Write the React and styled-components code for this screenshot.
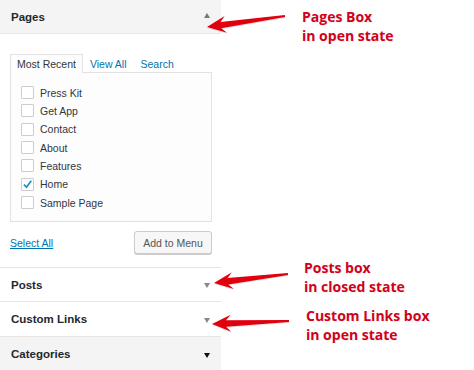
import React from "react";
import styled, { createGlobalStyle } from "styled-components";

const Global = createGlobalStyle`
  html, body { margin: 0; padding: 0; background: #fff; }
  body { font-family: "Liberation Sans", Arial, sans-serif; color: #23282d; }
`;

const Page = styled.div`
  position: relative;
  width: 474px;
  height: 370px;
  overflow: hidden;
  background: #fff;
`;

const Sidebar = styled.div`
  width: 221px;
  display: flex;
  flex-direction: column;
`;

const SectionHeader = styled.div`
  height: ${(p) => p.$h}px;
  box-sizing: border-box;
  display: flex;
  align-items: center;
  justify-content: space-between;
  padding: 0 11px 0 11px;
  background: ${(p) => (p.$shaded ? "#f4f4f4" : "#fff")};
  border-bottom: ${(p) => (p.$noBorder ? "none" : "1px solid #e6e6e6")};
  font-size: 11.5px;
  font-weight: bold;
  color: #23282d;
`;

const Caret = styled.span`
  width: 0;
  height: 0;
  border-left: 3.5px solid transparent;
  border-right: 3.5px solid transparent;
  ${(p) =>
    p.$up
      ? `border-bottom: 5px solid ${p.$color};`
      : `border-top: 5px solid ${p.$color};`}
  margin-top: ${(p) => (p.$up ? "-2px" : "2px")};
`;

const Body = styled.div`
  padding: 20px 8px 13px 10px;
  border-bottom: 1px solid #e6e6e6;
`;

const Tabs = styled.div`
  display: flex;
  align-items: flex-end;
  height: 19px;
  position: relative;
  z-index: 1;
`;

const Tab = styled.div`
  font-size: 10.5px;
  height: ${(p) => (p.$active ? "19px" : "18px")};
  box-sizing: border-box;
  display: flex;
  align-items: center;
  padding: 0 ${(p) => (p.$active ? "6px" : "7px")};
  color: ${(p) => (p.$active ? "#32373c" : "#0073aa")};
  background: ${(p) => (p.$active ? "#fdfdfd" : "transparent")};
  border: ${(p) => (p.$active ? "1px solid #e2e2e2" : "none")};
  border-bottom: none;
`;

const TabPanel = styled.div`
  margin-top: -1px;
  width: 202px;
  height: 150px;
  box-sizing: border-box;
  border: 1px solid #e2e2e2;
  background: #fdfdfd;
  padding: 13px 0 0 10px;
  display: flex;
  flex-direction: column;
  gap: 5.35px;
`;

const Row = styled.label`
  display: flex;
  align-items: center;
  gap: 6px;
  font-size: 10.5px;
  color: #32373c;
  height: 13px;
`;

const Box = styled.span`
  width: 13px;
  height: 13px;
  box-sizing: border-box;
  border: 1px solid #cdcdcd;
  border-radius: 1px;
  background: #fff;
  display: flex;
  align-items: center;
  justify-content: center;
`;

const Actions = styled.div`
  display: flex;
  justify-content: space-between;
  align-items: center;
  width: 202px;
  margin-top: 9px;
`;

const SelectAll = styled.a`
  font-size: 10.5px;
  color: #0073aa;
  text-decoration: underline;
  margin-top: 1px;
`;

const Button = styled.button`
  width: 78px;
  height: 23px;
  font-family: inherit;
  font-size: 10.5px;
  color: #555;
  background: #f7f7f7;
  border: 1px solid #cccccc;
  border-radius: 3px;
  box-shadow: 0 1px 0 #ccc;
  padding: 0;
`;

const Notes = styled.div`
  position: absolute;
  left: 0;
  top: 0;
  width: 474px;
  height: 370px;
  pointer-events: none;
`;

const Note = styled.div`
  position: absolute;
  left: ${(p) => p.$x}px;
  top: ${(p) => p.$y}px;
  font-family: "Open Sans", "Liberation Sans", sans-serif;
  font-weight: bold;
  font-size: 14px;
  line-height: 19px;
  color: #d0021b;
  text-shadow: 0 0 2px #fff, 1px 1px 1px rgba(0,0,0,0.08);
  white-space: nowrap;
`;

const Overlay = styled.svg`
  position: absolute;
  left: 0;
  top: 0;
`;

function arrowPoints(tx, ty, px, py) {
  const dx = tx - px;
  const dy = ty - py;
  const len = Math.hypot(dx, dy);
  const ux = dx / len;
  const uy = dy / len;
  const nx = -uy;
  const ny = ux;
  const headLen = 19;
  const headW = 8.5;
  const neckW = 3.2;
  const tailW = 0.9;
  const bx = px + ux * headLen;
  const by = py + uy * headLen;
  const nbx = px + ux * (headLen - 5);
  const nby = py + uy * (headLen - 5);
  const pts = [
    [px, py],
    [bx + nx * headW, by + ny * headW],
    [nbx + nx * neckW, nby + ny * neckW],
    [tx + nx * tailW, ty + ny * tailW],
    [tx - nx * tailW, ty - ny * tailW],
    [nbx - nx * neckW, nby - ny * neckW],
    [bx - nx * headW, by - ny * headW],
  ];
  return pts.map((p) => p.map((v) => v.toFixed(1)).join(",")).join(" ");
}

const arrows = [
  [285, 16, 207, 27],
  [288, 274, 214, 283],
  [289, 321, 212, 324],
];

const pages = ["Press Kit", "Get App", "Contact", "About", "Features", "Home", "Sample Page"];

export default function App() {
  return (
    <Page>
      <Global />
      <Sidebar>
        <SectionHeader $h={34} $shaded>
          Pages
          <Caret $up $color="#777" />
        </SectionHeader>
        <Body>
          <Tabs>
            <Tab $active>Most Recent</Tab>
            <Tab>View All</Tab>
            <Tab>Search</Tab>
          </Tabs>
          <TabPanel>
            {pages.map((p) => (
              <Row key={p}>
                <Box>
                  {p === "Home" && (
                    <svg width="11" height="11" viewBox="0 0 11 11">
                      <path d="M2 5.5 L4.5 8.2 L9.3 1.8" fill="none" stroke="#1e8cbe" strokeWidth="1.7" />
                    </svg>
                  )}
                </Box>
                {p}
              </Row>
            ))}
          </TabPanel>
          <Actions>
            <SelectAll>Select All</SelectAll>
            <Button>Add to Menu</Button>
          </Actions>
        </Body>
        <SectionHeader $h={34}>
          Posts
          <Caret $color="#888" />
        </SectionHeader>
        <SectionHeader $h={35}>
          Custom Links
          <Caret $color="#888" />
        </SectionHeader>
        <SectionHeader $h={34} $shaded $noBorder>
          Categories
          <Caret $color="#111" />
        </SectionHeader>
      </Sidebar>
      <Notes>
        <Overlay width="474" height="370">
          {arrows.map((a, i) => (
            <g key={i}>
              <polygon points={arrowPoints(a[0], a[1] + 1, a[2], a[3] + 1)} fill="rgba(0,0,0,0.12)" />
              <polygon points={arrowPoints(...a)} fill="#e0000e" />
            </g>
          ))}
        </Overlay>
        <Note $x={302} $y={7}>
          Pages Box
          <br />
          in open state
        </Note>
        <Note $x={304} $y={258}>
          Posts box
          <br />
          in closed state
        </Note>
        <Note $x={306} $y={306}>
          Custom Links box
          <br />
          in open state
        </Note>
      </Notes>
    </Page>
  );
}
